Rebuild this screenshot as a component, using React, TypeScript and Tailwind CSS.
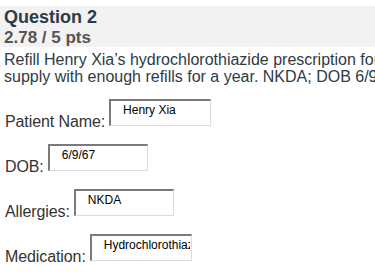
const font = { fontFamily: '"Liberation Sans", Arial, sans-serif' }

function Field({ label, value, width }: { label: string; value: string; width: string }) {
  return (
    <div className="flex items-end gap-[4px]">
      <span className="text-[16px] leading-[16px] tracking-[-0.1px] mb-[-4px] text-[#333333]">{label}</span>
      <input
        readOnly
        defaultValue={value}
        className={`${width} h-[27px] box-border border-t-2 border-l-2 border-r border-b border-t-[#7a7a7a] border-l-[#7a7a7a] border-r-[#dcdcdc] border-b-[#dcdcdc] bg-white pl-[12px] pr-[1px] pt-[2px] pb-[8px] text-[12px] leading-[14px] text-black outline-none`}
        style={font}
      />
    </div>
  )
}

export default function App() {
  return (
    <div className="w-[375px] h-[274px] overflow-hidden bg-white pt-[6px]" style={font}>
      <div className="bg-[#f2f2f2] h-[41px] px-[4px]">
        <div className="text-[18px] leading-[22px] font-bold text-[#2d3b45]">Question 2</div>
        <div className="text-[17px] leading-[19px] font-bold text-[#555555]">2.78 / 5 pts</div>
      </div>
      <p className="mt-[4px] px-[4px] text-[16px] leading-[17px] text-[#2d3b45] whitespace-nowrap">
        Refill Henry Xia’s hydrochlorothiazide prescription for a 30-day
        <br />
        supply with enough refills for a year. NKDA; DOB 6/9/67
      </p>
      <div className="mt-[14px] px-[5px] flex flex-col gap-[18px]">
        <Field label="Patient Name:" value="Henry Xia" width="w-[102px]" />
        <Field label="DOB:" value="6/9/67" width="w-[100px]" />
        <Field label="Allergies:" value="NKDA" width="w-[100px]" />
        <Field label="Medication:" value="Hydrochlorothiazide" width="w-[102px]" />
      </div>
    </div>
  )
}
